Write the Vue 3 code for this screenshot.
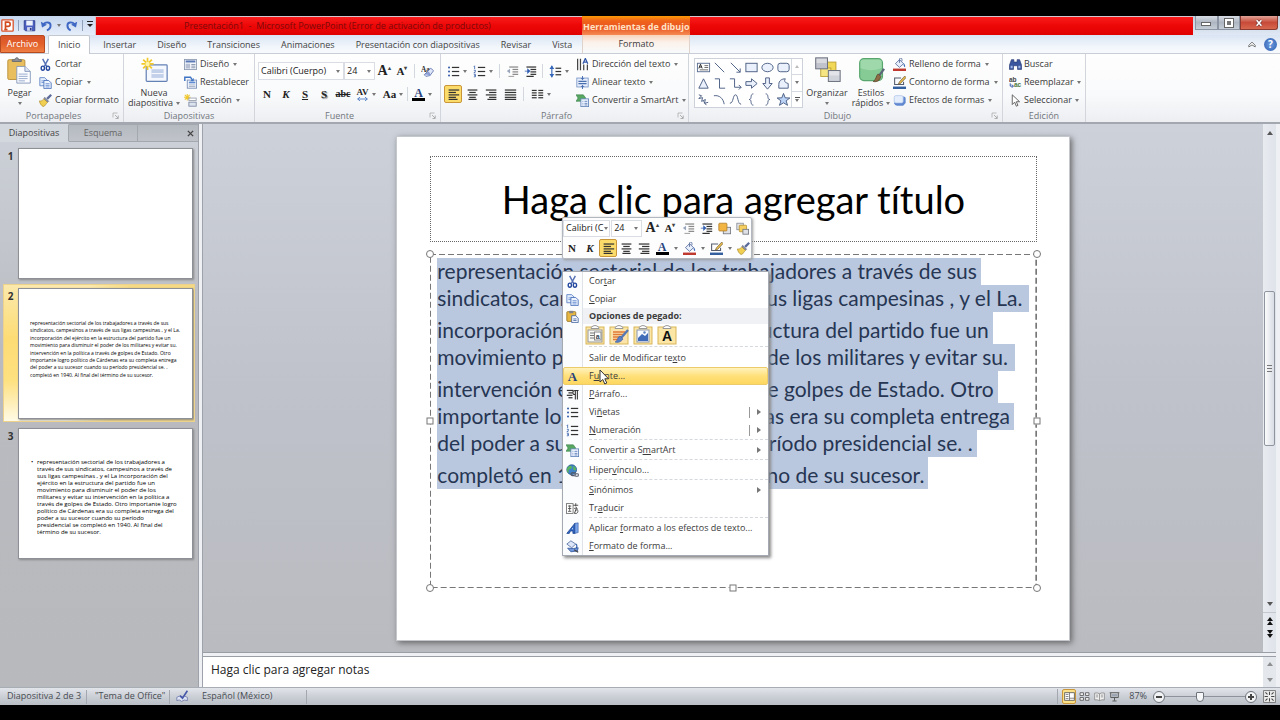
<script setup>
import { h, ref } from 'vue'

const line = (y, x1 = 2, x2 = 14, c = '#333') => `<path d="M${x1} ${y}H${x2}" stroke="${c}" stroke-width="1.5"/>`
const bars = (rows) => rows.map(([y, a, b]) => line(y, a, b)).join('')

const icons = {
  logo: '<rect x="1" y="1" width="14" height="14" rx="1" fill="#fff" stroke="#d9532c" stroke-width="1.6"/><path d="M5.500 13V3.800h3.200a2.600 2.600 0 0 1 0 5.200H5.500M4 13h4" fill="none" stroke="#d24a1e" stroke-width="2"/>',
  save: '<path d="M1.500 2h13v12.500h-11.500l-1.500-1.500z" fill="#4a5fc0" stroke="#2b3a8a"/><rect x="4" y="2" width="8" height="6" fill="#eef2fb"/><rect x="5" y="10" width="6" height="4.500" fill="#cfd6ee"/><rect x="8.500" y="11" width="2" height="3" fill="#2b3a8a"/>',
  undo: '<path d="M4 7.500C6 3 13 3 13 8c0 3-2 5-4.500 6" fill="none" stroke="#3f68c4" stroke-width="2.400"/><path d="M1 3.500l1.500 7 6-3.500z" fill="#3f68c4"/>',
  redo: '<path d="M12 7.500C10 3 3 3 3 8c0 3 1.500 5 4 6" fill="none" stroke="#3f68c4" stroke-width="2.400"/><path d="M15 3.500l-1.500 7-6-3.500z" fill="#3f68c4"/>',
  paste: '<rect x="2" y="3" width="19" height="22" rx="1.500" fill="#e9be5f" stroke="#b88d38"/><path d="M7 5V3h3c0-3 4-3 4 0h3v2z" fill="#8d9098" stroke="#686b72"/><path d="M12 10.500h9l6 5.500v13H12z" fill="#fbfcff" stroke="#8395b8"/><path d="M21 10.500V16h6" fill="#dbe4f5" stroke="#8395b8"/><path d="M14 19h10M14 21.500h10M14 24h10M14 26.500h7" stroke="#8fa3c8" stroke-width="1"/>',
  cut: '<path d="M4.500 1l5 9.500M11.500 1l-5 9.500" stroke="#5571b5" stroke-width="1.800" fill="none"/><ellipse cx="4.700" cy="12.500" rx="2" ry="2.500" fill="none" stroke="#24489f" stroke-width="1.700"/><ellipse cx="11" cy="12.500" rx="2" ry="2.500" fill="none" stroke="#24489f" stroke-width="1.700"/>',
  copy: '<path d="M1 2h6l3 3v7H1z" fill="#e3edfb" stroke="#527bc0"/><path d="M3 6h4M3 8h4" stroke="#6d91cf"/><path d="M6 5.500h6l3 3v7H6z" fill="#eef4ff" stroke="#3e69b5"/><path d="M8 9.500h5M8 11.500h5M8 13.500h5" stroke="#5c85cb"/>',
  brush: '<path d="M15 1l-5 5" stroke="#5b6b9a" stroke-width="2.800"/><path d="M7 4l5 5-2 1-4-4z" fill="#8890a8" stroke="#555c75" stroke-width=".6"/><path d="M6 6l4.500 4.500C8 12 8 15 5 15.500 3 14 1 12 .500 8.500 3 9 4 8 6 6z" fill="#f0cf52" stroke="#a98a2a" stroke-width=".8"/>',
  newslide: '<rect x="6" y="9" width="24" height="19" rx="1" fill="#f5f8fe" stroke="#6481b5" stroke-width="1.400"/><path d="M12 14h14v10H12z" fill="#c3d0ea"/><path d="M12 19h14" stroke="#fff"/><path d="M7.500 1v14M.500 8h14M2.500 3l10 10M12.500 3l-10 10" stroke="#f2c92b" stroke-width="2"/><circle cx="7.500" cy="8" r="2.500" fill="#fff3a8"/>',
  layout: '<rect x=".7" y="1.700" width="14.600" height="12.600" fill="#f4f7fc" stroke="#8492ab"/><rect x="2" y="3" width="12" height="2.500" fill="#5c7ab5"/><rect x="2" y="7" width="5.500" height="6" fill="#b6c0d2"/><path d="M9 8h5M9 10h5M9 12h5" stroke="#7787a3"/>',
  reset: '<rect x="4" y="5" width="11.500" height="10" fill="#f4f7fc" stroke="#6e85b3"/><rect x="6" y="7" width="8" height="2" fill="#5f8bd0"/><path d="M6 11h8M6 13h8" stroke="#98a5bc"/><path d="M1 6V1.500h7l2 3" stroke="#3f74c4" stroke-width="1.800" fill="none"/><path d="M12 2.500v4H7.500z" fill="#3f74c4"/>',
  section: '<path d="M4 0v8M0 4h8M1 1l6 6M7 1L1 7" stroke="#f0c72d" stroke-width="1.300"/><rect x="6" y="5" width="9" height="3" fill="#fff" stroke="#9098a6"/><rect x="6" y="10" width="9" height="5" fill="#dde3ee" stroke="#7584a0"/>',
  eraser: '<text x="0" y="8" font-family="Liberation Serif" font-size="9" font-weight="bold" fill="#333">Aa</text><path d="M8 8l4-4 3.500 3-4.500 6-5 1-2-2z" fill="#dfe6f8" stroke="#5b70ad"/><path d="M4.500 11.500l5-3 2 4.500" fill="#8fa3d9" stroke="#5b70ad" stroke-width=".6"/>',
  bullets: '<circle cx="2.500" cy="3" r="1.300" fill="#3b62ad"/><circle cx="2.500" cy="8" r="1.300" fill="#3b62ad"/><circle cx="2.500" cy="13" r="1.300" fill="#3b62ad"/>' + bars([[3, 6, 15], [8, 6, 15], [13, 6, 15]]),
  numbers: '<path d="M2 1v4M1 2l1-1M1 6.500h2v1.500L1 9.500h2M1 11.500h2v3H1M1.500 13H3" stroke="#3b62ad" fill="none"/>' + bars([[3, 6, 15], [8, 6, 15], [13, 6, 15]]),
  outdent: bars([[2.500, 4, 15], [5.500, 8, 15], [8.500, 8, 15], [11.500, 8, 15]]).replaceAll('#333', '#888') + '<path d="M3 14h7" stroke="#888"/><path d="M5 4.500L1 7.500l4 3z" fill="#9aa6bc"/>',
  indent: bars([[2.500, 3, 15], [5.500, 8, 15], [8.500, 8, 15], [11.500, 8, 15], [14, 3, 12]]) + '<path d="M1 7h3V4l4 3.500L4 11V8H1z" fill="#2f5db0"/>',
  spacing: '<path d="M3.500 1v14" stroke="#3566b8" stroke-width="1.400"/><path d="M.500 5l3-4.500 3 4.500zM.500 11l3 4.500 3-4.500z" fill="#3566b8"/>' + bars([[4, 8, 15], [8, 8, 15], [12, 8, 15]]),
  left: bars([[2.500, 2, 15], [5.500, 2, 11], [8.500, 2, 15], [11.500, 2, 11], [14, 2, 13]]),
  center: bars([[2.500, 2, 14], [5.500, 4, 12], [8.500, 2, 14], [11.500, 4, 12], [14, 3, 13]]),
  right: bars([[2.500, 1, 14], [5.500, 5, 14], [8.500, 1, 14], [11.500, 5, 14], [14, 3, 14]]),
  justify: bars([[2.500, 1, 15], [5.500, 1, 15], [8.500, 1, 15], [11.500, 1, 15], [14, 1, 15]]),
  columns: bars([[3, 1, 7], [6, 1, 7], [9, 1, 7], [12, 1, 7], [3, 9, 15], [6, 9, 15], [9, 9, 15], [12, 9, 15]]),
  textdir: '<path d="M2 1v14M5.500 1v14" stroke="#444" stroke-width="1.500"/><path d="M9.500 8V15M14 8v7" stroke="#444" stroke-width="1.500"/><path d="M8.500 7l3-6.500 3 6.500M9.500 5h4" fill="none" stroke="#3157a8" stroke-width="1.500"/>',
  valign: '<rect x="1" y="2.500" width="14" height="11" fill="#e6eefb" stroke="#7592c4"/><path d="M3 6.500h10M3 9.500h10" stroke="#4c6fae" stroke-width="1.500"/><path d="M8 0v4M8 16v-4M6 2.500l2 2 2-2M6 13.500l2-2 2 2" stroke="#2d5aa8" fill="none"/>',
  smartart: '<path d="M0 1h9l3 4-3 4H0l2.500-4z" fill="#57a662" stroke="#39804a" stroke-width=".7"/><rect x="6" y="6" width="9.500" height="9.500" fill="#f1f6ff" stroke="#5c80b8"/><path d="M8 9h1M10.500 9h3.500M8 11.500h1M10.500 11.500h3.500M8 13.500h1M10.500 13.500h3.500" stroke="#4b70b0"/>',
  arrange: '<rect x="13" y="6" width="13" height="13" fill="#f1d857" stroke="#b69a29"/><rect x="8" y="13" width="12" height="10" fill="#f6e583" stroke="#b69a29"/><rect x="2" y="1" width="14" height="13" fill="#c0c3cc" stroke="#6e7380" stroke-width="1.200"/><rect x="17" y="16" width="14" height="13" fill="#d0d3da" stroke="#6e7380" stroke-width="1.200"/><path d="M3 2h12v5H3zM18 17h12v5H18z" fill="#fff" opacity=".4"/>',
  styles: '<rect x="2" y="2" width="27" height="26" rx="5" fill="#86cb96" stroke="#58a66d" stroke-width="1.400"/><path d="M3 5q1-2 3-2h19q2 0 3 2v8C18 17 10 16 3 13z" fill="#a9deb4" opacity=".7"/><path d="M31 14l-6 8" stroke="#5d6578" stroke-width="2.600"/><path d="M24 20l3 3c-1 5-5 7-9 6 4-2 3-7 6-9z" fill="#8e6c45" stroke="#5f4930"/>',
  fill: '<rect x="0" y="13" width="16" height="3" fill="#c0392f"/><path d="M3 7l5-5 5 5-5 4.500z" fill="#e9effa" stroke="#4f6699"/><path d="M8 6V1.500c0-2 3-2 3 0V4" fill="none" stroke="#4f6699"/><path d="M13 6c2 2 2.500 4 1.500 5.500C13 10 13 8 13 6z" fill="#3f6bb8"/>',
  outline: '<rect x="0" y="13" width="16" height="3" fill="#35609f"/><path d="M10 2.500H2v8h11V7" fill="none" stroke="#555c6d" stroke-width="1.300"/><path d="M14.500 0L8 7l-1.500 3 3-1L16 2z" fill="#e6b94c" stroke="#6b5a36" stroke-width=".8"/>',
  effects: '<path d="M4 3h9q2.500 0 2.500 2v6l-3 3.500H5q-3 0-3.500-3z" fill="#5f88d0"/><rect x="1.500" y="2" width="11" height="9" rx="2" fill="#e4edfc" stroke="#a5bde6" stroke-width=".8"/>',
  find: '<path d="M3 2h3v3h4V2h3l2.500 7v5h-5V9.500h-5V14H.500V9z" fill="#3a569f" stroke="#24366f" stroke-width=".8"/><path d="M2 9.500h2.500v3H2zM11.500 9.500H14v3h-2.500z" fill="#9db4e6"/>',
  replace: '<text x="0" y="7" font-family="Liberation Sans" font-size="8" font-weight="bold" fill="#444">ab</text><text x="6" y="14" font-family="Liberation Sans" font-size="8" font-weight="bold" fill="#4b7a43">ac</text><path d="M1.500 9v3.500H5M3.500 10.500l2 2-2 2" fill="none" stroke="#3157a8" stroke-width="1.200"/>',
  pointer: '<path d="M4 1v12l3-3 2 5 2-1-2-4.500h4z" fill="#fff" stroke="#555" stroke-width="1.100"/>',
  clip: '<rect x="1" y="2" width="11" height="12" rx="1" fill="#e7b741" stroke="#94732a"/><path d="M4 1h5v3H4z" fill="#7c808a"/><path d="M7 7h5l3 3v5.500H7z" fill="#f5f8ff" stroke="#3f5f9d"/><path d="M9 11h4M9 13h4" stroke="#3f5f9d"/>',
  fontA: '<text x="8" y="14" text-anchor="middle" font-family="Liberation Serif" font-size="16" font-weight="bold" fill="#27447f">A</text>',
  paragraph: bars([[3, 1, 9], [6, 3, 8], [9, 1, 8], [12, 3, 8]]) + '<path d="M11.500 3v11M14 3v11M15.500 3H11c-3.500 0-3.500 5 0 5" fill="none" stroke="#333" stroke-width="1.300"/>',
  link: '<circle cx="7" cy="7" r="6" fill="#3f83c8" stroke="#27598f"/><path d="M3 3c3-2 5 0 4 2s-4 1-4 3 1 2 0 3C0 9 1 5 3 3zM9 2c3 1 4 4 3 6-2 0-4-1-3-3z" fill="#5bb55c"/><ellipse cx="9" cy="12.500" rx="2.800" ry="1.900" fill="none" stroke="#555d6b" stroke-width="1.500"/><ellipse cx="13" cy="13.500" rx="2.500" ry="1.700" fill="none" stroke="#777f8d" stroke-width="1.500"/>',
  translate: '<rect x=".7" y="2" width="8" height="12" fill="#fff" stroke="#666"/><path d="M2.500 5h4M2.500 8h4M4.500 4v7M2.500 11.500h4" stroke="#444"/><path d="M9 4h6M12 1.500v4M10 8c5-2 5 2 1 3M13 6.500L10.500 14M10 13.500c3 2 6-1 4-4" fill="none" stroke="#444" stroke-width="1.100"/>',
  fx: '<path d="M1 14L11 1.500V14H8.500v-3H5.500L4 14z" fill="#2f66c4" stroke="#1f4691"/><path d="M11 1.500l4-.5v12l-4 1z" fill="#7ba3e8" stroke="#1f4691" stroke-width=".6"/><path d="M7 9h1.500V7z" fill="#fff"/>',
  shapefmt: '<path d="M1 5l5-4 6 4-5 4.500z" fill="#dce6f8" stroke="#516c9f"/><path d="M12 5c2 1 1.500 4 .500 5" stroke="#3360ad" stroke-width="1.500" fill="none"/><path d="M2 10l4 4.500 8-1 1-4-6 1z" fill="#6f97dd" stroke="#2f559d"/><path d="M10 12l5 3" stroke="#444" stroke-width="1.600"/>',
  front: '<rect x="6.500" y="6.500" width="9" height="8" fill="#dfe1e6" stroke="#70747e"/><rect x="1" y="1.500" width="10" height="9.500" rx="1" fill="#f2b544" stroke="#b0802a"/>',
  back: '<rect x="1" y="1.500" width="8" height="8" fill="#dfe1e6" stroke="#8a8e98"/><rect x="4" y="4" width="9" height="8" rx="1" fill="#f5cf5f" stroke="#b89335"/><rect x="8.500" y="9" width="7" height="6" fill="#dfe1e6" stroke="#70747e"/>',
  spell: '<path d="M1 9q3-3 6 0 3-3 7 0v4q-4-2-7 1-3-3-6-1z" fill="#dfe4f5" stroke="#6d78a8"/><path d="M5 7l3 3 6-9" fill="none" stroke="#4757a8" stroke-width="2"/>',
  normal: '<rect x="1" y="2.500" width="14" height="11" fill="#fff" stroke="#555" stroke-width="1.200"/><path d="M8 2.500v11M8 10.500h7M2.500 5h4M2.500 8h4M2.500 11h4" stroke="#555"/>',
  sorter: '<path d="M1.500 2.500h5v4h-5zM9.500 2.500h5v4h-5zM1.500 9.500h5v4h-5zM9.500 9.500h5v4h-5z" fill="#f4f4f4" stroke="#555" stroke-width="1.200"/>',
  reading: '<path d="M1 3q3.500-1 7 1 3.500-2 7-1v10q-3.500-1-7 1-3.500-2-7-1zM8 4v10M3 6h3M3 8.500h3M10 6h3M10 8.500h3" fill="#f0f0f0" stroke="#777"/>',
  show: '<path d="M1 2.500h14M2.500 3v6.500h11V3M8 10v4M5 14.500h6" fill="none" stroke="#555" stroke-width="1.400"/><rect x="4" y="4.500" width="8" height="3.500" fill="#9aa3b0"/>',
  fit: '<rect x=".8" y=".8" width="14.400" height="14.400" fill="#eee" stroke="#666"/><path d="M8 2v4M8 10v4M2 8h4M10 8h4M3 3l2.500 2.500M13 3l-2.500 2.500M3 13l2.500-2.500M13 13l-2.500-2.500" stroke="#444" stroke-width="1.300"/>',
  launcher: '<path d="M2 11V2h9" fill="none" stroke="#aaa" stroke-width="1.500"/><path d="M6 6l6 6M12.500 7v6H7" fill="none" stroke="#999" stroke-width="1.500"/>',
  pKeep: '<rect x="1" y="2" width="18" height="17" fill="#fbe6a6" stroke="#d9b559"/><path d="M6 2.500q4-4 8 0v1H6z" fill="#fff" stroke="#999"/><rect x="3" y="5" width="14" height="12" fill="#f7f7f4" stroke="#999"/><path d="M5 8h4M5 10.500h4M5 13h4" stroke="#777"/><rect x="9.500" y="7" width="6.500" height="8" fill="#fff" stroke="#888"/><text x="10.800" y="13.500" font-family="Liberation Sans" font-size="7" font-weight="bold" fill="#345">a</text>',
  pMerge: '<rect x="1" y="2" width="18" height="17" fill="#fbe6a6" stroke="#d9b559"/><path d="M6 2.500q4-4 8 0v1H6z" fill="#fff" stroke="#999"/><rect x="3" y="5" width="14" height="12" fill="#fbe0b0"/><path d="M4 7h12M4 9.500h12M4 12h9M4 14.500h6" stroke="#e07a35" stroke-width="1.300"/><path d="M19 5l-7 8" stroke="#5678b5" stroke-width="2.400"/><path d="M11 11l3 3c-2 3-5 4-8 3 3-1 2-5 5-6z" fill="#5a7fc4" stroke="#3b5b99" stroke-width=".6"/>',
  pPic: '<rect x="1" y="2" width="18" height="17" fill="#fbe6a6" stroke="#d9b559"/><path d="M6 2.500q4-4 8 0v1H6z" fill="#fff" stroke="#999"/><rect x="4" y="5" width="12" height="12" fill="#f7faff" stroke="#8b98b3"/><path d="M5 16v-3l4-4 3 2 3-3v8z" fill="#3f6bb8"/><circle cx="11.500" cy="7.500" r="1.200" fill="#587ec0"/>',
  pText: '<rect x="1" y="2" width="18" height="17" fill="#fbe6a6" stroke="#d9b559"/><path d="M6 2.500q4-4 8 0v1H6z" fill="#fff" stroke="#999"/><text x="10" y="16" text-anchor="middle" font-family="Liberation Sans" font-size="14" font-weight="bold" fill="#111">A</text>'
}

const shapes = [
  '<rect x="1.500" y="3.500" width="13" height="9" fill="#fff" stroke="#5b6f92"/><path d="M9 6h4M9 8h4M4 10.500h9" stroke="#666"/><path d="M3 9l1.800-4.500L6.600 9M3.600 7.500h2.400" stroke="#222" fill="none"/>',
  '<path d="M3 3l10 10"/>',
  '<path d="M3 3l10 10M13 9v4H9" fill="none"/>',
  '<rect x="2" y="3.500" width="12" height="9"/>',
  '<ellipse cx="8" cy="8" rx="6" ry="4.500"/>',
  '<rect x="2" y="3.500" width="12" height="9" rx="2.500"/>',
  '<path d="M8 3l5 10H3z"/>',
  '<path d="M3 3h5v10h6" fill="none"/>',
  '<path d="M2 3h5v9h7M11.500 9.500L14 12l-2.500 2.500" fill="none"/>',
  '<path d="M2 6h6V3l6 5-6 5v-3H2z"/>',
  '<path d="M6 2v6H3l5 6 5-6h-3V2z"/>',
  '<path d="M3 13V9c0-4 3-6 7-6-2 3 0 4 3 5v5z"/>',
  '<path d="M3 3l3 1-3 3 4-1-1 4 4-2-1 4 4-1M8 10l3 4" fill="none"/>',
  '<path d="M2 4c6-1 10 3 11 9" fill="none"/>',
  '<path d="M2 12C6 12 5 3 8 3s2 10 6 10" fill="none"/>',
  '<path d="M10 2C6 2 9 8 5.500 8 9 8 6 14 10 14" fill="none"/>',
  '<path d="M6 2c4 0 1 6 4.500 6C7 8 10 14 6 14" fill="none"/>',
  '<path d="M8 1.500l1.800 4.700 5 .2-4 3 1.500 4.800L8 11.500l-4.300 2.700 1.500-4.800-4-3 5-.2z" fill="#b9d2f5"/>'
]

const Icon = (props) => h('svg', { viewBox: `0 0 ${props.box || 16} ${props.box || 16}`, innerHTML: icons[props.name], 'aria-hidden': 'true' })
Icon.props = ['name', 'box']

const tabs = ['Inicio', 'Insertar', 'Diseño', 'Transiciones', 'Animaciones', 'Presentación con diapositivas', 'Revisar', 'Vista']
const clipboardItems = [['cut', 'Cortar', 0], ['copy', 'Copiar', 1], ['brush', 'Copiar formato', 0]]
const slideItems = [['layout', 'Diseño', 1], ['reset', 'Restablecer', 0], ['section', 'Sección', 1]]
const paragraphItems = [['textdir', 'Dirección del texto', 1], ['valign', 'Alinear texto', 1], ['smartart', 'Convertir a SmartArt', 1]]
const drawItems = [['fill', 'Relleno de forma', 1], ['outline', 'Contorno de forma', 1], ['effects', 'Efectos de formas', 1]]
const editItems = [['find', 'Buscar', 0], ['replace', 'Reemplazar', 1], ['pointer', 'Seleccionar', 1]]

const lines = [
  { t: 'representación sectorial de los trabajadores a través de sus' },
  { t: 'sindicatos, campesinos a través de sus ligas campesinas , y el La.', wide: true },
  { t: 'incorporación del ejército en la estructura del partido fue un', para: true },
  { t: 'movimiento para disminuir el poder de los militares y evitar su.', wide: true },
  { t: 'intervención en la política a través de golpes de Estado. Otro', para: true },
  { t: 'importante logro político de Cárdenas era su completa entrega' },
  { t: 'del poder a su sucesor cuando su período presidencial se. .' },
  { t: 'completó en 1940. Al final del término de su sucesor.', para: true }
]
const thirdSlide = [
  'representación sectorial de los trabajadores a', 'través de sus sindicatos, campesinos a través de',
  'sus ligas campesinas , y el La incorporación del', 'ejército en la estructura del partido fue un',
  'movimiento para disminuir el poder de los', 'militares y evitar su intervención en la política a',
  'través de golpes de Estado. Otro importante logro', 'político de Cárdenas era su completa entrega del',
  'poder a su sucesor cuando su período', 'presidencial se completó en 1940. Al final del', 'término de su sucesor.'
]

const menu = [
  { icon: 'cut', label: 'Cor_tar' },
  { icon: 'copy', label: '_Copiar' },
  { header: 'Opciones de pegado:', icon: 'clip' },
  { paste: ['pKeep', 'pMerge', 'pPic', 'pText'] },
  { sep: true },
  { label: 'Salir de Modificar te_xto' },
  { icon: 'fontA', label: 'F_uente...', active: true },
  { icon: 'paragraph', label: '_Párrafo...' },
  { icon: 'bullets', label: 'Vi_ñetas', sub: true, split: true },
  { icon: 'numbers', label: '_Numeración', sub: true, split: true },
  { sep: true },
  { icon: 'smartart', label: 'Convertir a S_martArt', sub: true },
  { sep: true },
  { icon: 'link', label: 'Hiper_vínculo...' },
  { sep: true },
  { label: '_Sinónimos', sub: true },
  { icon: 'translate', label: 'Tr_aducir' },
  { sep: true },
  { icon: 'fx', label: 'Aplicar _formato a los efectos de texto...' },
  { icon: 'shapefmt', label: '_Formato de forma...' }
]
const split = (s) => {
  const i = s.indexOf('_')
  return [s.slice(0, i), s[i + 1], s.slice(i + 2)]
}
const notes = ref('Haga clic para agregar notas')
const zoom = ref(43)
</script>

<template>
  <div class="app">
    <header class="titlebar">
      <div class="qat">
        <Icon name="logo" class="ic" />
        <i class="vs"></i>
        <button aria-label="Guardar"><Icon name="save" class="ic" /></button>
        <button aria-label="Deshacer"><Icon name="undo" class="ic" /><i class="caret"></i></button>
        <button aria-label="Rehacer"><Icon name="redo" class="ic" /></button>
        <i class="vs"></i>
        <button class="more" aria-label="Personalizar"><i class="caret"></i></button>
      </div>
      <div class="title">Presentación1&nbsp; -&nbsp; Microsoft PowerPoint (Error de activación de productos)</div>
      <div class="winbtns">
        <button aria-label="Minimizar"><i class="min"></i></button>
        <button aria-label="Restaurar"><i class="max"></i></button>
        <button class="close" aria-label="Cerrar"><svg viewBox="0 0 10 10"><path d="M2 1.500l6 7M8 1.500l-6 7" stroke="#733" stroke-width="3.600" /><path d="M2 1.500l6 7M8 1.500l-6 7" stroke="#fff" stroke-width="2" /></svg></button>
      </div>
    </header>

    <nav class="tabs">
      <button class="file">Archivo</button>
      <button v-for="(t, i) in tabs" :key="t" :class="{ on: i === 0 }">{{ t }}</button>
      <div class="ctx">
        <span class="ctx-head">Herramientas de dibujo</span>
        <button>Formato</button>
      </div>
      <div class="help">
        <button aria-label="Minimizar la cinta"><svg class="chev" viewBox="0 0 10 8"><path d="M1 5l4-4 4 4v2L5 4.500 1 7z" fill="#fff" stroke="#555" /></svg></button>
        <button class="q" aria-label="Ayuda">?</button>
      </div>
    </nav>

    <div class="ribbon">
      <section class="group g1">
        <div class="body">
          <button class="big"><Icon name="paste" box="30" class="bic" /><span>Pegar</span><i class="caret"></i></button>
          <div class="col">
            <button v-for="b in clipboardItems" :key="b[1]" class="row"><Icon :name="b[0]" class="ic" />{{ b[1] }}<i v-if="b[2]" class="caret"></i></button>
          </div>
        </div>
        <footer>Portapapeles<Icon name="launcher" class="launch" /></footer>
      </section>

      <section class="group g2">
        <div class="body">
          <button class="big"><Icon name="newslide" box="31" class="bic" /><span>Nueva</span><span>diapositiva <i class="caret"></i></span></button>
          <div class="col">
            <button v-for="b in slideItems" :key="b[1]" class="row"><Icon :name="b[0]" class="ic" />{{ b[1] }}<i v-if="b[2]" class="caret"></i></button>
          </div>
        </div>
        <footer>Diapositivas</footer>
      </section>

      <section class="group g3">
        <div class="body tools">
          <div class="line">
            <span class="combo font"><select aria-label="Fuente"><option>Calibri (Cuerpo)</option></select><i class="caret"></i></span>
            <span class="combo size"><select aria-label="Tamaño de fuente"><option>24</option></select><i class="caret"></i></span>
            <button class="tb serif grow">A<sup>▴</sup></button>
            <button class="tb serif shrink">A<sup>▾</sup></button>
            <i class="vs"></i>
            <button class="tb" aria-label="Borrar formato"><Icon name="eraser" class="ic" /></button>
          </div>
          <div class="line spaced">
            <button class="tb serif">N</button>
            <button class="tb serif"><em>K</em></button>
            <button class="tb serif"><u>S</u></button>
            <button class="tb serif shadow">S</button>
            <button class="tb serif abc"><s>abc</s></button>
            <button class="tb wide serif av"><span>AV<svg viewBox="0 0 14 5"><path d="M1 2.500h12M4 0L1 2.500 4 5M10 0l3 2.500L10 5" fill="none" stroke="#3a6fc0" /></svg></span><i class="caret"></i></button>
            <button class="tb wide serif aa">Aa<i class="caret"></i></button>
            <i class="vs"></i>
            <button class="tb wide serif ink"><span>A</span><i class="caret"></i></button>
          </div>
        </div>
        <footer>Fuente<Icon name="launcher" class="launch" /></footer>
      </section>

      <section class="group g4">
        <div class="body">
          <div class="tools">
            <div class="line">
              <button class="tb wide" aria-label="Viñetas"><Icon name="bullets" class="ic" /><i class="caret"></i></button>
              <button class="tb wide" aria-label="Numeración"><Icon name="numbers" class="ic" /><i class="caret"></i></button>
              <i class="vs"></i>
              <button class="tb" aria-label="Reducir sangría"><Icon name="outdent" class="ic" /></button>
              <button class="tb" aria-label="Aumentar sangría"><Icon name="indent" class="ic" /></button>
              <i class="vs"></i>
              <button class="tb wide" aria-label="Interlineado"><Icon name="spacing" class="ic" /><i class="caret"></i></button>
            </div>
            <div class="line spaced">
              <button class="tb on" aria-label="Izquierda"><Icon name="left" class="ic" /></button>
              <button class="tb" aria-label="Centrar"><Icon name="center" class="ic" /></button>
              <button class="tb" aria-label="Derecha"><Icon name="right" class="ic" /></button>
              <button class="tb" aria-label="Justificar"><Icon name="justify" class="ic" /></button>
              <i class="vs"></i>
              <button class="tb wide" aria-label="Columnas"><Icon name="columns" class="ic" /><i class="caret"></i></button>
            </div>
          </div>
          <div class="col">
            <button v-for="b in paragraphItems" :key="b[1]" class="row"><Icon :name="b[0]" class="ic" />{{ b[1] }}<i v-if="b[2]" class="caret"></i></button>
          </div>
        </div>
        <footer>Párrafo<Icon name="launcher" class="launch" /></footer>
      </section>

      <section class="group g5">
        <div class="body">
          <div class="gallery">
            <div class="cells">
              <button v-for="(s, i) in shapes" :key="i" aria-label="Forma"><svg viewBox="0 0 16 16" fill="#eaf1fc" stroke="#4a5d82" v-html="s"></svg></button>
            </div>
            <div class="gscroll">
              <button aria-label="Arriba"><i class="caret up"></i></button>
              <button aria-label="Abajo"><i class="caret"></i></button>
              <button class="more" aria-label="Más"><i class="caret"></i></button>
            </div>
          </div>
          <button class="big"><Icon name="arrange" box="32" class="bic" /><span>Organizar</span><i class="caret"></i></button>
          <button class="big"><Icon name="styles" box="32" class="bic" /><span>Estilos</span><span>rápidos <i class="caret"></i></span></button>
          <div class="col">
            <button v-for="b in drawItems" :key="b[1]" class="row"><Icon :name="b[0]" class="ic" />{{ b[1] }}<i v-if="b[2]" class="caret"></i></button>
          </div>
        </div>
        <footer>Dibujo<Icon name="launcher" class="launch" /></footer>
      </section>

      <section class="group g6">
        <div class="body">
          <div class="col">
            <button v-for="b in editItems" :key="b[1]" class="row"><Icon :name="b[0]" class="ic" />{{ b[1] }}<i v-if="b[2]" class="caret"></i></button>
          </div>
        </div>
        <footer>Edición</footer>
      </section>
    </div>

    <main class="work">
      <aside class="pane">
        <div class="ptabs">
          <button class="on">Diapositivas</button>
          <button>Esquema</button>
          <button class="x" aria-label="Cerrar panel"><svg viewBox="0 0 8 8"><path d="M1 1l6 6M7 1L1 7" stroke="#444" stroke-width="1.600" /></svg></button>
        </div>
        <ol class="thumbs">
          <li><b>1</b><div class="thumb"></div></li>
          <li class="sel"><b>2</b>
            <div class="thumb t2"><p v-for="l in lines" :key="l.t" :class="{ para: l.para }">{{ l.t }}</p></div>
          </li>
          <li><b>3</b>
            <div class="thumb t3"><p v-for="l in thirdSlide" :key="l">{{ l }}</p></div>
          </li>
        </ol>
      </aside>

      <div class="editor">
        <div class="stage">
          <div class="canvas">
            <article class="slide">
              <h1 class="ph-title">Haga clic para agregar título</h1>
              <div class="ph-body">
                <svg class="dash" aria-hidden="true"><rect width="100%" height="100%" fill="none" stroke="#777" stroke-width="2" stroke-dasharray="6 3" /></svg>
                <p v-for="l in lines" :key="l.t" :class="{ para: l.para, wide: l.wide }"><span>{{ l.t }}</span></p>
                <i class="hd tl"></i><i class="hd tr"></i><i class="hd bl"></i><i class="hd br"></i>
                <i class="hd sq ml"></i><i class="hd sq mr"></i><i class="hd sq mb"></i>
              </div>
            </article>

            <div class="mini">
              <div class="line">
                <span class="combo mfont"><select aria-label="Fuente"><option>Calibri (C</option></select><i class="caret"></i></span>
                <span class="combo msize"><select aria-label="Tamaño"><option>24</option></select><i class="caret"></i></span>
                <button class="tb serif grow">A<sup>▴</sup></button>
                <button class="tb serif shrink">A<sup>▾</sup></button>
                <button class="tb" aria-label="Reducir sangría"><Icon name="outdent" class="ic" /></button>
                <button class="tb" aria-label="Aumentar sangría"><Icon name="indent" class="ic" /></button>
                <button class="tb" aria-label="Traer al frente"><Icon name="front" class="ic" /></button>
                <button class="tb" aria-label="Enviar al fondo"><Icon name="back" class="ic" /></button>
              </div>
              <div class="line">
                <button class="tb serif">N</button>
                <button class="tb serif"><em>K</em></button>
                <button class="tb on" aria-label="Izquierda"><Icon name="left" class="ic" /></button>
                <button class="tb" aria-label="Centrar"><Icon name="center" class="ic" /></button>
                <button class="tb" aria-label="Derecha"><Icon name="right" class="ic" /></button>
                <button class="tb wide serif ink"><span>A</span><i class="caret"></i></button>
                <button class="tb wide" aria-label="Relleno"><Icon name="fill" class="ic" /><i class="caret"></i></button>
                <button class="tb wide" aria-label="Contorno"><Icon name="outline" class="ic" /><i class="caret"></i></button>
                <button class="tb" aria-label="Copiar formato"><Icon name="brush" class="ic" /></button>
              </div>
            </div>

            <ul class="menu">
              <template v-for="(m, i) in menu" :key="i">
                <li v-if="m.sep" class="sep"></li>
                <li v-else-if="m.header" class="mh"><span class="gut"><Icon :name="m.icon" class="ic" /></span><b>{{ m.header }}</b></li>
                <li v-else-if="m.paste" class="paste"><button v-for="p in m.paste" :key="p" :aria-label="p"><Icon :name="p" box="20" /></button></li>
                <li v-else>
                  <button :class="{ active: m.active }">
                    <span class="gut"><Icon v-if="m.icon" :name="m.icon" class="ic" /></span>
                    <span class="lbl">{{ split(m.label)[0] }}<u>{{ split(m.label)[1] }}</u>{{ split(m.label)[2] }}</span>
                    <span v-if="m.sub" class="arrow" :class="{ split: m.split }"></span>
                  </button>
                  <svg v-if="m.active" class="cursor" viewBox="0 0 10 16"><path d="M1 1v12l2.800-2.500 2 4.500 2-1-2-4.200H9.500z" fill="#fff" stroke="#333" /></svg>
                </li>
              </template>
            </ul>
          </div>
          <div class="vbar">
            <i class="tri up"></i>
            <div class="track"><div class="grip"></div></div>
            <i class="tri"></i>
            <div class="pages"><i class="tri up"></i><i class="tri up"></i><b></b><i class="tri"></i><i class="tri"></i></div>
          </div>
        </div>
        <div class="notes">
          <textarea v-model="notes" aria-label="Notas" rows="1"></textarea>
          <div class="nbar"><i class="tri up"></i><i class="tri"></i></div>
        </div>
      </div>
    </main>

    <footer class="status">
      <span class="s1">Diapositiva 2 de 3</span>
      <span class="s2">"Tema de Office"</span>
      <span class="s3"><Icon name="spell" class="ic" />Español (México)</span>
      <div class="views">
        <button class="on" aria-label="Normal"><Icon name="normal" class="ic" /></button>
        <button aria-label="Clasificador"><Icon name="sorter" class="ic" /></button>
        <button aria-label="Lectura"><Icon name="reading" class="ic" /></button>
        <button aria-label="Presentación"><Icon name="show" class="ic" /></button>
      </div>
      <span class="pct">87%</span>
      <button class="round" aria-label="Alejar"><i></i></button>
      <input v-model="zoom" type="range" aria-label="Zoom">
      <button class="round plus" aria-label="Acercar"><i></i></button>
      <button class="fitb" aria-label="Ajustar"><Icon name="fit" class="ic" /></button>
    </footer>
  </div>
</template>

<style>
body { background: #000; }
</style>

<style scoped>
* { box-sizing: border-box; }
.app { display: flex; flex-direction: column; height: 100vh; padding: 16px 0 15px; background: #000; color: #3b3b3b; font: 9px/12px "Open Sans", "Noto Sans", sans-serif; overflow: hidden; }
button, select, textarea { font: inherit; color: inherit; border: 0; padding: 0; margin: 0; background: none; }
button { display: flex; align-items: center; justify-content: center; white-space: nowrap; }
p, h1, ul, ol { margin: 0; padding: 0; list-style: none; }
.ic { width: 13px; height: 13px; flex: none; display: block; }
.caret { display: inline-block; flex: none; border: 2px solid transparent; border-top: 3px solid #777; border-bottom: 0; }
.caret.up { border-bottom: 3px solid #bbb; border-top: 0; }
.vs { width: 1px; height: 14px; background: #d3d7de; flex: none; }

.titlebar { display: flex; height: 19px; flex: none; background: #dfe7f3; }
.qat { display: flex; align-items: center; gap: 4px; width: 95px; padding-left: 1px; flex: none; background: linear-gradient(#c5d6ee, #e6eefa); }
.qat .vs { background: #8fa0ba; height: 11px; }
.qat button { gap: 4px; }
.qat .more .caret { border-width: 3px 3px 0; border-top-color: #222; position: relative; }
.qat .more .caret::before { content: ""; position: absolute; left: -3px; top: -6px; width: 6px; height: 1px; background: #222; }
.title { flex: 1; min-width: 0; padding-left: 88px; line-height: 18px; background: linear-gradient(#f81c1c, #ee0808 45%, #e00000); border: 1px solid #d8c5cc; border-width: 1px 0 0 1px; color: #7c0909; white-space: nowrap; overflow: hidden; }
.winbtns { display: flex; align-items: flex-start; width: 87px; padding: 0 2px; background: linear-gradient(#c3cedd, #dfe8f4); flex: none; }
.winbtns button { height: 14px; flex: 22; background: linear-gradient(#d8dde4, #aeb6c2 50%, #c6cdd7); border: 1px solid #8b95a4; border-top: 0; }
.winbtns .close { flex: 38; background: linear-gradient(#e0a398, #c84a38 50%, #d6684f); border-color: #8a3a30; border-radius: 0 0 3px 0; }
.winbtns svg { width: 8px; height: 8px; }
.min { width: 10px; height: 4px; border: 1px solid #666; background: #fff; margin-top: 3px; }
.max { width: 8px; height: 8px; border: 2px solid #fff; outline: 1px solid #666; background: #777; }

.tabs { display: flex; height: 19px; flex: none; background: linear-gradient(#d9e4f3, #f3f7fc 70%, #f7f9fc); border-bottom: 1px solid #c9ced6; }
.tabs > button { padding: 0 10px 0 11px; height: 19px; color: #444; }
.tabs > .file { width: 45px; margin-right: 3px; padding: 0; color: #fff; background: linear-gradient(#d9532a, #e2602b 50%, #f07e42); border: 1px solid #b84a20; border-radius: 2px 2px 0 0; height: 18px; }
.tabs > .on { background: #fff; border: 1px solid #c3c8d0; border-bottom: 0; border-radius: 2px 2px 0 0; padding: 0 9px; margin-right: 2px; }
.ctx { position: relative; width: 108px; background: linear-gradient(#f7d5bd, #fbf1ea 40%, #f8fafc); border: 1px solid #dfd3cc; border-width: 0 1px; }
.ctx button { width: 100%; height: 18px; }
.ctx-head { position: absolute; bottom: 100%; left: -1px; right: -1px; height: 19px; line-height: 22px; text-align: center; font-weight: 700; white-space: nowrap; color: #ffe3c4; background: linear-gradient(#fb9a06, #f0641c 25%, #ea5520 60%, #f58b54); }
.help { display: flex; align-items: center; gap: 8px; margin-left: auto; padding-right: 3px; }
.chev { width: 8px; height: 7px; }
.q { width: 13px; height: 13px; border-radius: 50%; background: radial-gradient(#6d9be0, #2c5cae); color: #fff; font-weight: 700; font-size: 10px; }

.ribbon { display: flex; height: 70px; flex: none; background: linear-gradient(#fefefe, #f9fafb 60%, #eceef2); border-bottom: 2px solid #a3a7af; }
.group { display: flex; flex-direction: column; border-right: 1px solid #d2d6dc; flex: none; }
.g1 { width: 124px; } .g2 { width: 131px; } .g3 { width: 186px; } .g4 { width: 248px; } .g5 { width: 314px; } .g6 { width: 83px; }
.body { display: flex; height: 55px; }
.group > footer { position: relative; text-align: center; color: #72767d; line-height: 13px; padding-right: 16px; }
.g2 > footer, .g6 > footer { padding-right: 0; }
.launch { position: absolute; right: 3px; top: 3px; width: 8px; height: 8px; }
.col { display: flex; flex-direction: column; padding-top: 1px; }
.row { height: 18px; justify-content: flex-start; gap: 3px; }
.row .caret { margin-left: 1px; }
.big { flex-direction: column; justify-content: flex-start; padding-top: 3px; line-height: 10px; }
.big span { display: flex; align-items: center; gap: 3px; }
.big > .caret { margin-top: 4px; }
.bic { width: 27px; height: 27px; margin-bottom: 4px; }
.g1 .big { width: 39px; } .g2 .big { width: 60px; }
.g5 .big { width: 44px; } .g5 .gallery + .big { margin-left: 2px; }
.tools { display: flex; flex-direction: column; gap: 3px; padding: 7px 0 0 3px; }
.line { display: flex; align-items: center; height: 20px; }
.spaced { gap: 1px; }
.g3 .vs, .g4 .vs { margin: 0 3px; }
.g3 .spaced .vs { margin: 0; }
.g4 .tools { width: 135px; flex: none; }
.combo { position: relative; display: flex; align-items: center; height: 18px; border: 1px solid #dadde3; background: #fff; }
.combo select { appearance: none; width: 100%; height: 16px; padding: 0 0 0 2px; color: #222; outline: 0; }
.combo .caret { position: absolute; right: 3px; pointer-events: none; }
.font { width: 86px; } .size { width: 31px; }
.tb { width: 18px; height: 18px; flex: none; border-radius: 2px; }
.tb.wide { width: 26px; gap: 3px; }
.tb.on { background: #fbdc6b; border: 1px solid #c9973a; }
.serif { font: 700 11px/12px "Liberation Serif", serif; color: #222; }
.grow { font-size: 14px; } .shrink { font-size: 11px; }
.tb sup { font-size: 6px; line-height: 6px; margin-bottom: 6px; color: #444; }
.shadow { text-shadow: 1px 1px 1px #777; }
.abc { font-size: 10px; }
.av { font-size: 9px; }
.av span { display: flex; flex-direction: column; align-items: center; line-height: 9px; }
.av svg { width: 13px; height: 4px; }
.aa { font-size: 11px; }
.ink span { border-bottom: 3px solid #000; line-height: 10px; width: 13px; font-size: 12px; color: #27447f; }
.gallery { display: flex; margin: 4px 0 0 5px; height: 50px; border: 1px solid #cdd2da; background: #fff; }
.cells { display: grid; grid-template-columns: repeat(6, 16px); grid-template-rows: repeat(3, 16px); }
.cells svg { width: 15px; height: 15px; display: block; }
.gscroll { display: flex; flex-direction: column; width: 11px; border-left: 1px solid #d5d9e0; }
.gscroll button { flex: 1; border-bottom: 1px solid #d5d9e0; }
.gscroll .more { border: 0; flex-direction: column; }
.gscroll .more::before { content: ""; width: 5px; height: 1px; background: #555; margin-bottom: 1px; }
.g6 .col { padding-left: 6px; }
.g6 .row { gap: 2px; }

.work { flex: 1; min-height: 0; display: flex; background: #eef0f4; }
.pane { width: 199px; flex: none; display: flex; flex-direction: column; background: linear-gradient(#cdd1d9, #b9bbc0 40%, #b7b9bd); border-right: 1px solid #9ea2aa; }
.ptabs { display: flex; height: 18px; flex: none; }
.ptabs button { width: 69px; background: linear-gradient(#b5b9c0, #c0c4ca); border: 1px solid #a3a7ae; border-left: 0; color: #666; height: 18px; }
.ptabs .on { background: #d3d7de; color: #444; border-color: transparent #a3a7ae transparent transparent; }
.ptabs .x { flex: 1; justify-content: flex-end; padding-right: 4px; border-right: 0; }
.ptabs .x svg { width: 7px; height: 7px; }
.thumbs { display: flex; flex-direction: column; gap: 2px; padding: 2px 3px 0; }
.thumbs li { display: flex; padding: 4px 2px 4px 0; }
.thumbs b { width: 15px; text-align: center; font-size: 10px; line-height: 16px; color: #333; }
.thumbs .sel { background: linear-gradient(100deg, transparent 40%, #f5d983 60%), linear-gradient(#fbe9ad, #fddc74 40%, #fde080 70%, #fffbe8); outline: 1px solid #ecd28a; outline-offset: -1px; }
.thumb { flex: 1; height: 131px; margin-bottom: -1px; overflow: hidden; background: #fff; border: 1px solid #8d9097; box-shadow: 1px 1px 2px #888; color: #000; white-space: nowrap; }
.t2 { padding: 31px 0 0 11px; font-size: 5px; line-height: 7px; }
.t2 .para { padding-top: 1px; }
.t3 { padding: 30px 0 0 18px; font-size: 6px; line-height: 7px; }
.t3 p:first-child::before { content: "•"; display: inline-block; width: 6px; margin-left: -6px; }

.editor { flex: 1; min-width: 0; display: flex; flex-direction: column; margin-left: 3px; padding-right: 4px; border-left: 1px solid #9ea2aa; }
.stage { flex: 1; min-height: 0; display: flex; border-bottom: 1px solid #9a9ea6; }
.canvas { position: relative; flex: 1; display: flex; align-items: center; justify-content: center; background: linear-gradient(#cdd1da, #bfc2cb 50%, #babbc0); }
.slide { display: flex; flex-direction: column; gap: 12px; height: calc(100% - 23px); aspect-ratio: 4 / 3; padding: 19px 32px 52px 33px; background: #fff; box-shadow: 2px 2px 6px #666; border: 1px solid #c4c7cc; font-family: Lato, sans-serif; font-variant-ligatures: none; color: #000; }
.ph-title { height: 86px; flex: none; border: 1px dotted #666; font-size: 38px; font-weight: 400; line-height: 84px; text-align: center; white-space: nowrap; }
.ph-body { position: relative; flex: 1; padding: 4px 0 0 7px; font-size: 21px; line-height: 26px; color: #263653; white-space: nowrap; }
.dash { position: absolute; inset: 0; width: 100%; height: 100%; }
.ph-body p { position: relative; display: flex; height: 27px; }
.ph-body p span { background: #bac8df; padding-right: 4px; }
.ph-body .para { height: 32px; }
.ph-body .para span { padding-top: 5px; }
.ph-body .wide span { padding-right: 7px; }
.hd { position: absolute; width: 8px; height: 8px; border: 1px solid #777; background: #fff; border-radius: 50%; transform: translate(-50%, -50%); }
.sq { border-radius: 0; width: 7px; height: 7px; }
.tl { left: 0; top: 0; } .tr { left: 100%; top: 0; } .bl { left: 0; top: 100%; } .br { left: 100%; top: 100%; }
.ml { left: 0; top: 50%; } .mr { left: 100%; top: 50%; } .mb { left: 50%; top: 100%; }

.mini { position: absolute; left: 359px; top: 93px; width: 190px; background: #fdfdfe; border: 1px solid #b3b7bf; border-radius: 2px; box-shadow: 1px 1px 3px #999; }
.mini .line { height: 20px; }
.mfont { width: 49px; } .msize { width: 32px; margin: 0 1px; }
.mini .combo { height: 17px; }
.mfont .caret { right: 1px; }
.mini .tb { width: 18px; }
.mini .tb.wide { width: 27px; gap: 5px; }
.menu { position: absolute; left: 359px; top: 147px; width: 207px; background: linear-gradient(90deg, #fbfcfd 19px, #dfe3e8 19px, #dfe3e8 20px, #fff 20px); border: 1px solid #a5a9b1; box-shadow: 2px 2px 3px #888; }
.menu li { position: relative; }
.menu li > button { width: 100%; height: 18px; justify-content: flex-start; border: 1px solid transparent; border-radius: 2px; color: #3b3b3b; }
.menu li > .active { background: linear-gradient(#fff2bd, #ffe07a 50%, #fed75f); border-color: #eccb6a; }
.gut { width: 25px; flex: none; padding-left: 2px; }
.menu u { text-underline-offset: 1px; }
.lbl { flex: 1; text-align: left; }
.arrow { display: flex; align-items: center; justify-content: flex-end; width: 15px; height: 11px; padding-right: 6px; }
.arrow::after { content: ""; border: 3px solid transparent; border-left: 4px solid #777; border-right: 0; }
.arrow.split { width: 18px; border-left: 1px solid #999; }
.mh { display: flex; align-items: center; height: 16px; padding-left: 1px; background: linear-gradient(90deg, transparent 20px, #eff1f5 20px); }
.menu .paste { display: flex; gap: 4px; height: 22px; padding-left: 22px; align-items: center; }
.menu .paste button { width: 20px; height: 20px; border: 0; }
.paste svg { width: 20px; height: 20px; display: block; }
.sep { height: 2px; margin-left: 26px; border-top: 1px dashed #d5d8dd; }
.paste + .sep { height: 3px; }
.cursor { position: absolute; left: 36px; top: 2px; width: 10px; height: 16px; z-index: 1; }

.vbar { width: 13px; flex: none; display: flex; flex-direction: column; align-items: center; padding: 7px 0 14px; gap: 6px; background: linear-gradient(90deg, #e8ebf0, #dfe3ea); }
.tri { border: 3px solid transparent; border-top: 4px solid #555; border-bottom: 0; }
.tri.up { border-top: 0; border-bottom: 4px solid #555; }
.track { flex: 1; width: 100%; display: flex; align-items: center; padding: 0 1px; }
.grip { width: 100%; height: 34%; border: 1px solid #8f959f; border-radius: 2px; background: linear-gradient(90deg, #fafbfc, #d9dde4); display: flex; align-items: center; justify-content: center; }
.grip::after { content: ""; width: 5px; height: 7px; background: repeating-linear-gradient(#777 0 1px, transparent 1px 3px); }
.pages { display: flex; flex-direction: column; align-items: center; border-top: 1px solid #c4c8cf; width: 100%; padding-top: 4px; }
.pages b { height: 5px; }
.pages .tri { border-top-color: #111; border-bottom-color: #111; }
.notes { display: flex; height: 31px; margin-top: 3px; flex: none; border-top: 1px solid #9a9ea6; background: #fff; }
.notes textarea { flex: 1; resize: none; overflow: hidden; outline: 0; padding: 4px 8px; font-size: 12px; line-height: 17px; color: #222; background: #fff; }
.nbar { width: 13px; display: flex; flex-direction: column; align-items: center; justify-content: space-between; padding: 5px 0; background: #e4e7ec; }
.nbar .tri { opacity: .6; }

.status { display: flex; align-items: center; height: 18px; flex: none; padding-right: 4px; background: linear-gradient(#e2e5ea, #cbcfd6 50%, #b9bec6); border-top: 1px solid #a8acb4; color: #484c52; }
.status > span { display: flex; align-items: center; height: 14px; padding-bottom: 1px; white-space: nowrap; }
.s1 { width: 87px; padding-left: 7px; border-right: 1px solid #a3a8b0; }
.s2 { width: 83px; padding-left: 8px; border-right: 1px solid #a3a8b0; }
.s3 { width: 137px; padding-left: 6px; gap: 13px; border-right: 1px solid #a3a8b0; }
.views { display: flex; gap: 1px; margin-left: auto; padding-left: 4px; border-left: 1px solid #a3a8b0; }
.views button { width: 14px; height: 15px; }
.views .ic { width: 11px; height: 11px; }
.views .on { background: #fbe08a; border: 1px solid #c9973a; border-radius: 2px; }
.pct { padding: 0 6px 0 8px; }
.round { width: 12px; height: 12px; border: 1px solid #6d727b; border-radius: 50%; background: #f2f3f5; position: relative; flex: none; }
.round i { width: 6px; height: 2px; background: #444; }
.plus i::after { content: ""; position: absolute; left: 4px; top: 2px; width: 2px; height: 6px; background: #444; }
.status input { appearance: none; width: 80px; height: 12px; margin: 0; background: linear-gradient(#8d929b, #8d929b) center / 100% 1px no-repeat; }
.status input::-webkit-slider-thumb { appearance: none; width: 8px; height: 10px; border: 1px solid #6d727b; border-radius: 1px 1px 4px 4px; background: #f6f7f8; }
.fitb { margin-left: 6px; }
</style>
